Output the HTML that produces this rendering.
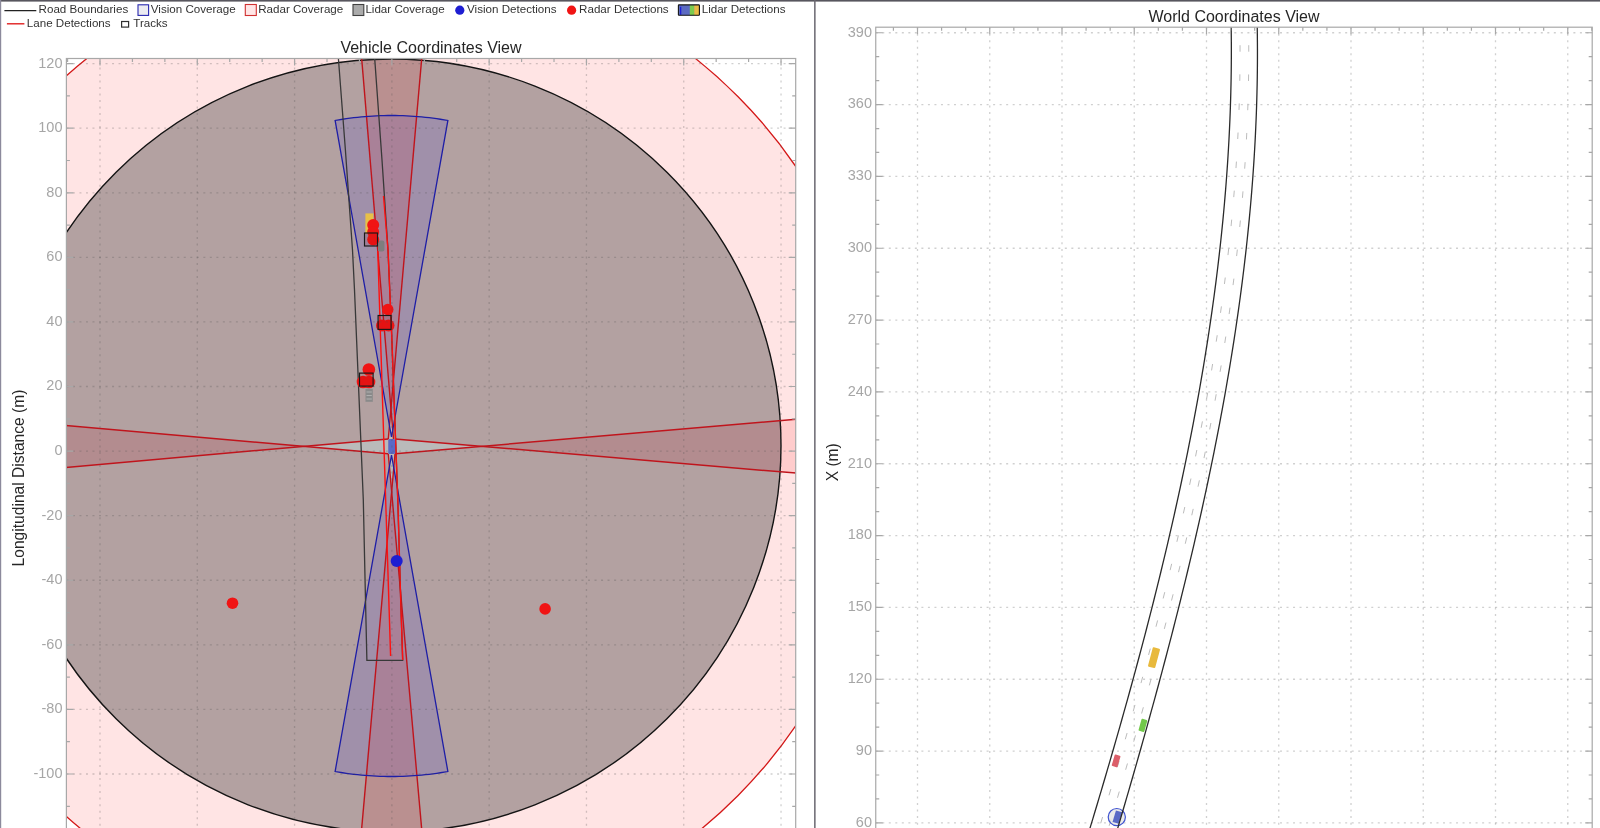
<!DOCTYPE html>
<html><head><meta charset="utf-8"><title>Bird's-Eye Plot</title>
<style>html,body{margin:0;padding:0;background:#fff;width:1600px;height:828px;overflow:hidden;position:relative;font-family:"Liberation Sans",sans-serif}</style>
</head><body>
<svg width="1600" height="828" viewBox="0 0 1600 828" style="position:absolute;left:0;top:0;will-change:transform">
<defs>
<clipPath id="cl"><rect x="66.4" y="58.5" width="729.3000000000001" height="841.5"/></clipPath>
<clipPath id="cr"><rect x="875.75" y="27.2" width="716.45" height="900"/></clipPath>
<linearGradient id="lidg" x1="0" x2="1" y1="0" y2="0"><stop offset="0" stop-color="#4a5ab8"/><stop offset="0.45" stop-color="#5a78c0"/><stop offset="0.6" stop-color="#7cc060"/><stop offset="0.75" stop-color="#d8c050"/><stop offset="1" stop-color="#e8b840"/></linearGradient>
<clipPath id="lid"><ellipse cx="391.5" cy="445.45" rx="389.5" ry="386.5"/></clipPath>
</defs>
<rect width="1600" height="828" fill="#ffffff"/>
<g clip-path="url(#cl)">
<ellipse cx="391.2" cy="446.1" rx="490.6" ry="494.1" fill="#ffe4e4" stroke="#d41818" stroke-width="1.3"/>
<g fill="#ff0000" fill-opacity="0.1"><polygon points="302.5,446.3 0,419.8 0,473.3"/><polygon points="488.75,446.3 900,410.4 900,482.0"/></g>
<ellipse cx="391.5" cy="445.45" rx="389.5" ry="386.5" fill="#b3a1a1"/>
<g fill="#b38c8f" clip-path="url(#lid)"><polygon points="302.5,446.3 0,419.8 0,473.3"/><polygon points="488.75,446.3 900,410.4 900,482.0"/></g>
<polygon points="302.5,446.3 388.3,438.9 388.3,453.8" fill="#bababa"/>
<polygon points="488.75,446.3 395.1,438.9 395.1,453.8" fill="#bababa"/>
<polygon points="391.5,437 335.12,120.48 338.84,119.84 342.57,119.24 346.31,118.69 350.06,118.18 353.8,117.72 357.56,117.3 361.32,116.92 365.08,116.59 368.85,116.3 372.62,116.05 376.39,115.86 380.17,115.7 383.94,115.59 387.72,115.52 391.5,115.5 395.28,115.52 399.06,115.59 402.83,115.7 406.61,115.86 410.38,116.05 414.15,116.3 417.92,116.59 421.68,116.92 425.44,117.3 429.2,117.72 432.94,118.18 436.69,118.69 440.43,119.24 444.16,119.84 447.88,120.48" fill="#0000ff" fill-opacity="0.1" stroke="none"/>
<polygon points="391.5,455 335.12,771.52 338.84,772.16 342.57,772.76 346.31,773.31 350.06,773.82 353.8,774.28 357.56,774.7 361.32,775.08 365.08,775.41 368.85,775.7 372.62,775.95 376.39,776.14 380.17,776.3 383.94,776.41 387.72,776.48 391.5,776.5 395.28,776.48 399.06,776.41 402.83,776.3 406.61,776.14 410.38,775.95 414.15,775.7 417.92,775.41 421.68,775.08 425.44,774.7 429.2,774.28 432.94,773.82 436.69,773.31 440.43,772.76 444.16,772.16 447.88,771.52" fill="#0000ff" fill-opacity="0.1" stroke="none"/>
<polygon points="390.96,408.7 355.1,-20 428.6,-20" fill="#ff0000" fill-opacity="0.1"/><polygon points="390.96,408.7 393.5,439 388.3,439" fill="#bababa"/>
<polygon points="391.65,491.6 355.3,900 428,900" fill="#ff0000" fill-opacity="0.1"/><polygon points="391.65,491.6 395,454 388.3,454" fill="#bababa"/>
<ellipse cx="391.5" cy="445.45" rx="389.5" ry="386.5" fill="none" stroke="#141414" stroke-width="1.4"/>
<polyline points="0,419.8 388.3,453.8" fill="none" stroke="#c0141c" stroke-width="1.5"/>
<polyline points="0,473.3 388.3,438.9" fill="none" stroke="#c0141c" stroke-width="1.5"/>
<polyline points="900,410.4 395.1,453.8" fill="none" stroke="#c0141c" stroke-width="1.5"/>
<polyline points="900,482.0 395.1,438.9" fill="none" stroke="#c0141c" stroke-width="1.5"/>
<polyline points="355.1,-20 393.5,439" fill="none" stroke="#c0141c" stroke-width="1.4"/>
<polyline points="428.6,-20 388.3,439" fill="none" stroke="#c0141c" stroke-width="1.4"/>
<polyline points="355.3,900 395,454" fill="none" stroke="#c0141c" stroke-width="1.4"/>
<polyline points="428.0,900 388.3,454" fill="none" stroke="#c0141c" stroke-width="1.4"/>
<polygon points="391.5,437 335.12,120.48 338.84,119.84 342.57,119.24 346.31,118.69 350.06,118.18 353.8,117.72 357.56,117.3 361.32,116.92 365.08,116.59 368.85,116.3 372.62,116.05 376.39,115.86 380.17,115.7 383.94,115.59 387.72,115.52 391.5,115.5 395.28,115.52 399.06,115.59 402.83,115.7 406.61,115.86 410.38,116.05 414.15,116.3 417.92,116.59 421.68,116.92 425.44,117.3 429.2,117.72 432.94,118.18 436.69,118.69 440.43,119.24 444.16,119.84 447.88,120.48" fill="none" stroke="#1e1ea6" stroke-width="1.3"/>
<polygon points="391.5,455 335.12,771.52 338.84,772.16 342.57,772.76 346.31,773.31 350.06,773.82 353.8,774.28 357.56,774.7 361.32,775.08 365.08,775.41 368.85,775.7 372.62,775.95 376.39,776.14 380.17,776.3 383.94,776.41 387.72,776.48 391.5,776.5 395.28,776.48 399.06,776.41 402.83,776.3 406.61,776.14 410.38,775.95 414.15,775.7 417.92,775.41 421.68,775.08 425.44,774.7 429.2,774.28 432.94,773.82 436.69,773.31 440.43,772.76 444.16,772.16 447.88,771.52" fill="none" stroke="#1e1ea6" stroke-width="1.3"/>
<polyline points="338.4,40 338.4,58.5 345.4,150 352.5,250 354.5,290 360.8,440 363.3,500 365.5,600 366.9,660.4 402.7,660.4 400.7,600 397.8,500 391.5,330 388,250 382,160 374.7,58.5 374.7,40" fill="none" stroke="#383838" stroke-width="1.3"/>
<polyline points="377.8,251 390.6,656" fill="none" stroke="#ff1010" stroke-width="1.4"/>
<polyline points="383.5,196 388,250 391.5,330 397.8,500 400.7,600 402.7,660" fill="none" stroke="#ff1010" stroke-width="1.4"/>
<rect x="388.3" y="439" width="6.8" height="15" rx="1.5" fill="#5a6ac8"/>
<rect x="365.4" y="213.4" width="8" height="20" fill="#e8c048"/>
<rect x="378" y="240.6" width="6.4" height="10.8" rx="2" fill="#7e7e7e"/>
<rect x="365.5" y="388.8" width="7.3" height="13" fill="#8a8a8a"/>
<line x1="366.5" x2="371.8" y1="392" y2="392" stroke="#b0b0b0" stroke-width="1"/>
<line x1="366.5" x2="371.8" y1="395.5" y2="395.5" stroke="#b0b0b0" stroke-width="1"/>
<line x1="366.5" x2="371.8" y1="399" y2="399" stroke="#b0b0b0" stroke-width="1"/>
<circle cx="373.2" cy="225" r="6" fill="#f01414"/>
<circle cx="373.2" cy="232" r="6" fill="#f01414"/>
<circle cx="373.2" cy="239.5" r="6" fill="#f01414"/>
<circle cx="387.8" cy="309.5" r="5.7" fill="#f01414"/>
<circle cx="382" cy="325.5" r="6" fill="#f01414"/>
<circle cx="388.5" cy="325.5" r="6" fill="#f01414"/>
<circle cx="368.85" cy="369.5" r="6.3" fill="#f01414"/>
<circle cx="363" cy="382" r="6.3" fill="#f01414"/>
<circle cx="369" cy="382" r="6.3" fill="#f01414"/>
<rect x="364.5" y="233" width="13.0" height="13" fill="#901010" fill-opacity="0.12" stroke="#181818" stroke-width="1.15"/>
<rect x="378.1" y="315.5" width="13.0" height="13.899999999999977" fill="#901010" fill-opacity="0.12" stroke="#181818" stroke-width="1.15"/>
<rect x="359.5" y="373.1" width="13.600000000000023" height="13.0" fill="#901010" fill-opacity="0.12" stroke="#181818" stroke-width="1.15"/>
<circle cx="232.5" cy="603.2" r="5.8" fill="#f01414"/>
<circle cx="545.1" cy="608.9" r="5.8" fill="#f01414"/>
<circle cx="396.7" cy="560.9" r="6" fill="#1e1ed2"/>
<line x1="100" x2="100" y1="54.34" y2="900" stroke="#505050" stroke-opacity="0.27" stroke-width="1.3" stroke-dasharray="2 4.52"/>
<line x1="197.29" x2="197.29" y1="54.34" y2="900" stroke="#505050" stroke-opacity="0.27" stroke-width="1.3" stroke-dasharray="2 4.52"/>
<line x1="294.58" x2="294.58" y1="54.34" y2="900" stroke="#505050" stroke-opacity="0.27" stroke-width="1.3" stroke-dasharray="2 4.52"/>
<line x1="391.87" x2="391.87" y1="54.34" y2="900" stroke="#505050" stroke-opacity="0.27" stroke-width="1.3" stroke-dasharray="2 4.52"/>
<line x1="489.16" x2="489.16" y1="54.34" y2="900" stroke="#505050" stroke-opacity="0.27" stroke-width="1.3" stroke-dasharray="2 4.52"/>
<line x1="586.45" x2="586.45" y1="54.34" y2="900" stroke="#505050" stroke-opacity="0.27" stroke-width="1.3" stroke-dasharray="2 4.52"/>
<line x1="683.74" x2="683.74" y1="54.34" y2="900" stroke="#505050" stroke-opacity="0.27" stroke-width="1.3" stroke-dasharray="2 4.52"/>
<line x1="781.03" x2="781.03" y1="54.34" y2="900" stroke="#505050" stroke-opacity="0.27" stroke-width="1.3" stroke-dasharray="2 4.52"/>
<line x1="66.4" x2="795.7" y1="838.58" y2="838.58" stroke="#505050" stroke-opacity="0.27" stroke-width="1.3" stroke-dasharray="2 4.52"/>
<line x1="66.4" x2="795.7" y1="774" y2="774" stroke="#505050" stroke-opacity="0.27" stroke-width="1.3" stroke-dasharray="2 4.52"/>
<line x1="66.4" x2="795.7" y1="709.42" y2="709.42" stroke="#505050" stroke-opacity="0.27" stroke-width="1.3" stroke-dasharray="2 4.52"/>
<line x1="66.4" x2="795.7" y1="644.84" y2="644.84" stroke="#505050" stroke-opacity="0.27" stroke-width="1.3" stroke-dasharray="2 4.52"/>
<line x1="66.4" x2="795.7" y1="580.26" y2="580.26" stroke="#505050" stroke-opacity="0.27" stroke-width="1.3" stroke-dasharray="2 4.52"/>
<line x1="66.4" x2="795.7" y1="515.68" y2="515.68" stroke="#505050" stroke-opacity="0.27" stroke-width="1.3" stroke-dasharray="2 4.52"/>
<line x1="66.4" x2="795.7" y1="451.1" y2="451.1" stroke="#505050" stroke-opacity="0.27" stroke-width="1.3" stroke-dasharray="2 4.52"/>
<line x1="66.4" x2="795.7" y1="386.52" y2="386.52" stroke="#505050" stroke-opacity="0.27" stroke-width="1.3" stroke-dasharray="2 4.52"/>
<line x1="66.4" x2="795.7" y1="321.94" y2="321.94" stroke="#505050" stroke-opacity="0.27" stroke-width="1.3" stroke-dasharray="2 4.52"/>
<line x1="66.4" x2="795.7" y1="257.36" y2="257.36" stroke="#505050" stroke-opacity="0.27" stroke-width="1.3" stroke-dasharray="2 4.52"/>
<line x1="66.4" x2="795.7" y1="192.78" y2="192.78" stroke="#505050" stroke-opacity="0.27" stroke-width="1.3" stroke-dasharray="2 4.52"/>
<line x1="66.4" x2="795.7" y1="128.2" y2="128.2" stroke="#505050" stroke-opacity="0.27" stroke-width="1.3" stroke-dasharray="2 4.52"/>
<line x1="66.4" x2="795.7" y1="63.62" y2="63.62" stroke="#505050" stroke-opacity="0.27" stroke-width="1.3" stroke-dasharray="2 4.52"/>
</g>
<rect x="66.4" y="58.5" width="729.3" height="900" fill="none" stroke="#a8a8a8" stroke-width="1.2"/>
<path d="M66.4,806.29h3.5M795.7,806.29h-3.5M66.4,774h7M795.7,774h-7M66.4,741.71h3.5M795.7,741.71h-3.5M66.4,709.42h7M795.7,709.42h-7M66.4,677.13h3.5M795.7,677.13h-3.5M66.4,644.84h7M795.7,644.84h-7M66.4,612.55h3.5M795.7,612.55h-3.5M66.4,580.26h7M795.7,580.26h-7M66.4,547.97h3.5M795.7,547.97h-3.5M66.4,515.68h7M795.7,515.68h-7M66.4,483.39h3.5M795.7,483.39h-3.5M66.4,451.1h7M795.7,451.1h-7M66.4,418.81h3.5M795.7,418.81h-3.5M66.4,386.52h7M795.7,386.52h-7M66.4,354.23h3.5M795.7,354.23h-3.5M66.4,321.94h7M795.7,321.94h-7M66.4,289.65h3.5M795.7,289.65h-3.5M66.4,257.36h7M795.7,257.36h-7M66.4,225.07h3.5M795.7,225.07h-3.5M66.4,192.78h7M795.7,192.78h-7M66.4,160.49h3.5M795.7,160.49h-3.5M66.4,128.2h7M795.7,128.2h-7M66.4,95.91h3.5M795.7,95.91h-3.5M66.4,63.62h7M795.7,63.62h-7M67.57,58.5v3.5M100,58.5v7M132.43,58.5v3.5M164.86,58.5v3.5M197.29,58.5v7M229.72,58.5v3.5M262.15,58.5v3.5M294.58,58.5v7M327.01,58.5v3.5M359.44,58.5v3.5M391.87,58.5v7M424.3,58.5v3.5M456.73,58.5v3.5M489.16,58.5v7M521.59,58.5v3.5M554.02,58.5v3.5M586.45,58.5v7M618.88,58.5v3.5M651.31,58.5v3.5M683.74,58.5v7M716.17,58.5v3.5M748.6,58.5v3.5M781.03,58.5v7" stroke="#a8a8a8" stroke-width="1.2" fill="none"/>
<text x="62.5" y="777.9" text-anchor="end" font-size="14.5" fill="#a6a6a6" font-family="Liberation Sans, sans-serif">-100</text>
<text x="62.5" y="713.32" text-anchor="end" font-size="14.5" fill="#a6a6a6" font-family="Liberation Sans, sans-serif">-80</text>
<text x="62.5" y="648.74" text-anchor="end" font-size="14.5" fill="#a6a6a6" font-family="Liberation Sans, sans-serif">-60</text>
<text x="62.5" y="584.16" text-anchor="end" font-size="14.5" fill="#a6a6a6" font-family="Liberation Sans, sans-serif">-40</text>
<text x="62.5" y="519.58" text-anchor="end" font-size="14.5" fill="#a6a6a6" font-family="Liberation Sans, sans-serif">-20</text>
<text x="62.5" y="455" text-anchor="end" font-size="14.5" fill="#a6a6a6" font-family="Liberation Sans, sans-serif">0</text>
<text x="62.5" y="390.42" text-anchor="end" font-size="14.5" fill="#a6a6a6" font-family="Liberation Sans, sans-serif">20</text>
<text x="62.5" y="325.84" text-anchor="end" font-size="14.5" fill="#a6a6a6" font-family="Liberation Sans, sans-serif">40</text>
<text x="62.5" y="261.26" text-anchor="end" font-size="14.5" fill="#a6a6a6" font-family="Liberation Sans, sans-serif">60</text>
<text x="62.5" y="196.68" text-anchor="end" font-size="14.5" fill="#a6a6a6" font-family="Liberation Sans, sans-serif">80</text>
<text x="62.5" y="132.1" text-anchor="end" font-size="14.5" fill="#a6a6a6" font-family="Liberation Sans, sans-serif">100</text>
<text x="62.5" y="67.52" text-anchor="end" font-size="14.5" fill="#a6a6a6" font-family="Liberation Sans, sans-serif">120</text>
<text x="431" y="53.1" text-anchor="middle" font-size="16" fill="#262626" font-family="Liberation Sans, sans-serif">Vehicle Coordinates View</text>
<text transform="translate(23.6,478) rotate(-90)" text-anchor="middle" font-size="15.6" fill="#262626" font-family="Liberation Sans, sans-serif">Longitudinal Distance (m)</text>
<g clip-path="url(#cr)">
<line x1="917.5" x2="917.5" y1="27.2" y2="900" stroke="#505050" stroke-opacity="0.27" stroke-width="1.3" stroke-dasharray="2 4.52"/>
<line x1="989.75" x2="989.75" y1="27.2" y2="900" stroke="#505050" stroke-opacity="0.27" stroke-width="1.3" stroke-dasharray="2 4.52"/>
<line x1="1062" x2="1062" y1="27.2" y2="900" stroke="#505050" stroke-opacity="0.27" stroke-width="1.3" stroke-dasharray="2 4.52"/>
<line x1="1134.25" x2="1134.25" y1="27.2" y2="900" stroke="#505050" stroke-opacity="0.27" stroke-width="1.3" stroke-dasharray="2 4.52"/>
<line x1="1206.5" x2="1206.5" y1="27.2" y2="900" stroke="#505050" stroke-opacity="0.27" stroke-width="1.3" stroke-dasharray="2 4.52"/>
<line x1="1278.75" x2="1278.75" y1="27.2" y2="900" stroke="#505050" stroke-opacity="0.27" stroke-width="1.3" stroke-dasharray="2 4.52"/>
<line x1="1351" x2="1351" y1="27.2" y2="900" stroke="#505050" stroke-opacity="0.27" stroke-width="1.3" stroke-dasharray="2 4.52"/>
<line x1="1423.25" x2="1423.25" y1="27.2" y2="900" stroke="#505050" stroke-opacity="0.27" stroke-width="1.3" stroke-dasharray="2 4.52"/>
<line x1="1495.5" x2="1495.5" y1="27.2" y2="900" stroke="#505050" stroke-opacity="0.27" stroke-width="1.3" stroke-dasharray="2 4.52"/>
<line x1="1567.75" x2="1567.75" y1="27.2" y2="900" stroke="#505050" stroke-opacity="0.27" stroke-width="1.3" stroke-dasharray="2 4.52"/>
<line x1="875.75" x2="1592.2" y1="822.9" y2="822.9" stroke="#505050" stroke-opacity="0.27" stroke-width="1.3" stroke-dasharray="2 4.52"/>
<line x1="875.75" x2="1592.2" y1="751.07" y2="751.07" stroke="#505050" stroke-opacity="0.27" stroke-width="1.3" stroke-dasharray="2 4.52"/>
<line x1="875.75" x2="1592.2" y1="679.24" y2="679.24" stroke="#505050" stroke-opacity="0.27" stroke-width="1.3" stroke-dasharray="2 4.52"/>
<line x1="875.75" x2="1592.2" y1="607.41" y2="607.41" stroke="#505050" stroke-opacity="0.27" stroke-width="1.3" stroke-dasharray="2 4.52"/>
<line x1="875.75" x2="1592.2" y1="535.57" y2="535.57" stroke="#505050" stroke-opacity="0.27" stroke-width="1.3" stroke-dasharray="2 4.52"/>
<line x1="875.75" x2="1592.2" y1="463.74" y2="463.74" stroke="#505050" stroke-opacity="0.27" stroke-width="1.3" stroke-dasharray="2 4.52"/>
<line x1="875.75" x2="1592.2" y1="391.91" y2="391.91" stroke="#505050" stroke-opacity="0.27" stroke-width="1.3" stroke-dasharray="2 4.52"/>
<line x1="875.75" x2="1592.2" y1="320.08" y2="320.08" stroke="#505050" stroke-opacity="0.27" stroke-width="1.3" stroke-dasharray="2 4.52"/>
<line x1="875.75" x2="1592.2" y1="248.25" y2="248.25" stroke="#505050" stroke-opacity="0.27" stroke-width="1.3" stroke-dasharray="2 4.52"/>
<line x1="875.75" x2="1592.2" y1="176.41" y2="176.41" stroke="#505050" stroke-opacity="0.27" stroke-width="1.3" stroke-dasharray="2 4.52"/>
<line x1="875.75" x2="1592.2" y1="104.58" y2="104.58" stroke="#505050" stroke-opacity="0.27" stroke-width="1.3" stroke-dasharray="2 4.52"/>
<line x1="875.75" x2="1592.2" y1="32.75" y2="32.75" stroke="#505050" stroke-opacity="0.27" stroke-width="1.3" stroke-dasharray="2 4.52"/>
<path d="M1239.79,22.6L1239.65,16.1M1248.46,22.42L1248.33,15.92M1240.05,51.71L1240.04,45.21M1248.75,51.69L1248.74,45.19M1239.79,80.82L1239.89,74.32M1248.5,80.96L1248.61,74.46M1239.01,109.92L1239.23,103.43M1247.73,110.21L1247.95,103.72M1237.73,139.01L1238.06,132.52M1246.45,139.45L1246.78,132.96M1235.97,168.07L1236.41,161.59M1244.68,168.66L1245.11,162.17M1233.74,197.11L1234.28,190.63M1242.44,197.83L1242.97,191.35M1231.07,226.11L1231.7,219.64M1239.74,226.96L1240.38,220.49M1227.96,255.07L1228.69,248.61M1236.61,256.05L1237.34,249.59M1224.43,283.98L1225.26,277.54M1233.06,285.08L1233.88,278.64M1220.51,312.85L1221.42,306.41M1229.11,314.06L1230.02,307.63M1216.21,341.66L1217.21,335.24M1224.78,342.99L1225.77,336.56M1211.55,370.42L1212.62,364.01M1220.09,371.85L1221.16,365.44M1206.54,399.13L1207.69,392.73M1215.05,400.66L1216.2,394.26M1201.2,427.78L1202.42,421.39M1209.68,429.4L1210.9,423.01M1195.55,456.37L1196.84,450M1204.01,458.08L1205.29,451.71M1189.6,484.9L1190.95,478.54M1198.03,486.69L1199.38,480.34M1183.37,513.38L1184.79,507.03M1191.78,515.25L1193.2,508.9M1176.88,541.8L1178.35,535.46M1185.27,543.74L1186.74,537.41M1170.14,570.16L1171.67,563.84M1178.52,572.18L1180.04,565.86M1163.17,598.47L1164.74,592.16M1171.53,600.56L1173.11,594.25M1155.98,626.73L1157.6,620.43M1164.34,628.88L1165.96,622.58M1148.58,654.93L1150.25,648.65M1156.94,657.15L1158.6,650.86M1141,683.09L1142.7,676.82M1149.36,685.36L1151.06,679.09M1133.23,711.2L1134.98,704.94M1141.6,713.53L1143.35,707.27M1125.31,739.27L1127.09,733.02M1133.7,741.65L1135.47,735.4M1117.24,767.3L1119.05,761.06M1125.65,769.74L1127.46,763.49M1109.03,795.29L1110.87,789.06M1117.47,797.78L1119.31,791.54M1100.71,823.25L1102.57,817.02M1109.18,825.78L1111.04,819.56" stroke="#bcbcbc" stroke-width="1" fill="none"/>
<rect x="1150.25" y="647.7" width="7.5" height="20" rx="1" fill="#e8b93c" transform="rotate(14.9 1154 657.7)"/>
<rect x="1139.9" y="719.15" width="6" height="12.5" rx="1" fill="#72c84a" transform="rotate(15.72 1142.9 725.4)"/>
<rect x="1113.1" y="754.9" width="6" height="12" rx="1" fill="#dc5f6a" transform="rotate(16.09 1116.1 760.9)"/>
<circle cx="1116.8" cy="817.1" r="8.6" fill="#e6e6e6" fill-opacity="0.8" stroke="#3e52d0" stroke-width="1.2"/>
<rect x="1114.1" y="811.1" width="6.6" height="12" fill="#5a6ac6" transform="rotate(16.59 1117.4 817.1)"/>
<polyline points="1230.53,0 1230.74,7.06 1230.92,14.12 1231.07,21.18 1231.19,28.24 1231.27,35.29 1231.33,42.35 1231.35,49.41 1231.34,56.47 1231.3,63.53 1231.23,70.59 1231.13,77.65 1230.99,84.71 1230.83,91.76 1230.64,98.82 1230.42,105.88 1230.17,112.94 1229.89,120 1229.58,127.06 1229.24,134.12 1228.88,141.18 1228.48,148.24 1228.06,155.29 1227.61,162.35 1227.13,169.41 1226.62,176.47 1226.09,183.53 1225.53,190.59 1224.94,197.65 1224.33,204.71 1223.69,211.76 1223.02,218.82 1222.33,225.88 1221.61,232.94 1220.87,240 1220.1,247.06 1219.3,254.12 1218.48,261.18 1217.64,268.24 1216.77,275.29 1215.88,282.35 1214.96,289.41 1214.02,296.47 1213.05,303.53 1212.06,310.59 1211.05,317.65 1210.02,324.71 1208.96,331.76 1207.88,338.82 1206.77,345.88 1205.65,352.94 1204.5,360 1203.33,367.06 1202.14,374.12 1200.93,381.18 1199.7,388.24 1198.44,395.29 1197.17,402.35 1195.87,409.41 1194.56,416.47 1193.22,423.53 1191.86,430.59 1190.49,437.65 1189.09,444.71 1187.68,451.76 1186.24,458.82 1184.79,465.88 1183.32,472.94 1181.83,480 1180.32,487.06 1178.8,494.12 1177.26,501.18 1175.69,508.24 1174.12,515.29 1172.52,522.35 1170.91,529.41 1169.28,536.47 1167.63,543.53 1165.97,550.59 1164.29,557.65 1162.6,564.71 1160.89,571.76 1159.16,578.82 1157.42,585.88 1155.67,592.94 1153.9,600 1152.11,607.06 1150.31,614.12 1148.5,621.18 1146.67,628.24 1144.83,635.29 1142.97,642.35 1141.11,649.41 1139.22,656.47 1137.33,663.53 1135.42,670.59 1133.5,677.65 1131.57,684.71 1129.63,691.76 1127.67,698.82 1125.7,705.88 1123.72,712.94 1121.73,720 1119.73,727.06 1117.72,734.12 1115.7,741.18 1113.66,748.24 1111.62,755.29 1109.57,762.35 1107.5,769.41 1105.43,776.47 1103.35,783.53 1101.26,790.59 1099.16,797.65 1097.05,804.71 1094.93,811.76 1092.81,818.82 1090.67,825.88 1088.53,832.94 1086.38,840" fill="none" stroke="#2a2a2a" stroke-width="1.3"/>
<polyline points="1256.53,0 1256.76,7.06 1256.95,14.12 1257.12,21.18 1257.25,28.24 1257.35,35.29 1257.41,42.35 1257.45,49.41 1257.45,56.47 1257.42,63.53 1257.36,70.59 1257.27,77.65 1257.15,84.71 1256.99,91.76 1256.81,98.82 1256.6,105.88 1256.36,112.94 1256.08,120 1255.78,127.06 1255.45,134.12 1255.09,141.18 1254.7,148.24 1254.29,155.29 1253.84,162.35 1253.37,169.41 1252.87,176.47 1252.34,183.53 1251.78,190.59 1251.2,197.65 1250.59,204.71 1249.95,211.76 1249.29,218.82 1248.6,225.88 1247.89,232.94 1247.15,240 1246.38,247.06 1245.59,254.12 1244.77,261.18 1243.93,268.24 1243.06,275.29 1242.17,282.35 1241.26,289.41 1240.32,296.47 1239.36,303.53 1238.37,310.59 1237.36,317.65 1236.33,324.71 1235.28,331.76 1234.2,338.82 1233.1,345.88 1231.98,352.94 1230.83,360 1229.67,367.06 1228.48,374.12 1227.27,381.18 1226.05,388.24 1224.8,395.29 1223.53,402.35 1222.24,409.41 1220.92,416.47 1219.59,423.53 1218.24,430.59 1216.88,437.65 1215.49,444.71 1214.08,451.76 1212.65,458.82 1211.21,465.88 1209.75,472.94 1208.27,480 1206.77,487.06 1205.25,494.12 1203.72,501.18 1202.17,508.24 1200.6,515.29 1199.02,522.35 1197.42,529.41 1195.8,536.47 1194.17,543.53 1192.52,550.59 1190.85,557.65 1189.18,564.71 1187.48,571.76 1185.77,578.82 1184.05,585.88 1182.31,592.94 1180.56,600 1178.79,607.06 1177.01,614.12 1175.22,621.18 1173.42,628.24 1171.6,635.29 1169.76,642.35 1167.92,649.41 1166.06,656.47 1164.19,663.53 1162.31,670.59 1160.42,677.65 1158.52,684.71 1156.6,691.76 1154.68,698.82 1152.74,705.88 1150.79,712.94 1148.84,720 1146.87,727.06 1144.89,734.12 1142.9,741.18 1140.91,748.24 1138.9,755.29 1136.89,762.35 1134.87,769.41 1132.83,776.47 1130.79,783.53 1128.75,790.59 1126.69,797.65 1124.63,804.71 1122.56,811.76 1120.48,818.82 1118.4,825.88 1116.31,832.94 1114.21,840" fill="none" stroke="#2a2a2a" stroke-width="1.3"/>
</g>
<rect x="875.75" y="27.2" width="716.45" height="900" fill="none" stroke="#a8a8a8" stroke-width="1.2"/>
<path d="M875.75,822.9h7M1592.2,822.9h-7M875.75,798.96h3.5M1592.2,798.96h-3.5M875.75,775.01h3.5M1592.2,775.01h-3.5M875.75,751.07h7M1592.2,751.07h-7M875.75,727.13h3.5M1592.2,727.13h-3.5M875.75,703.18h3.5M1592.2,703.18h-3.5M875.75,679.24h7M1592.2,679.24h-7M875.75,655.29h3.5M1592.2,655.29h-3.5M875.75,631.35h3.5M1592.2,631.35h-3.5M875.75,607.41h7M1592.2,607.41h-7M875.75,583.46h3.5M1592.2,583.46h-3.5M875.75,559.52h3.5M1592.2,559.52h-3.5M875.75,535.57h7M1592.2,535.57h-7M875.75,511.63h3.5M1592.2,511.63h-3.5M875.75,487.69h3.5M1592.2,487.69h-3.5M875.75,463.74h7M1592.2,463.74h-7M875.75,439.8h3.5M1592.2,439.8h-3.5M875.75,415.85h3.5M1592.2,415.85h-3.5M875.75,391.91h7M1592.2,391.91h-7M875.75,367.97h3.5M1592.2,367.97h-3.5M875.75,344.02h3.5M1592.2,344.02h-3.5M875.75,320.08h7M1592.2,320.08h-7M875.75,296.13h3.5M1592.2,296.13h-3.5M875.75,272.19h3.5M1592.2,272.19h-3.5M875.75,248.25h7M1592.2,248.25h-7M875.75,224.3h3.5M1592.2,224.3h-3.5M875.75,200.36h3.5M1592.2,200.36h-3.5M875.75,176.41h7M1592.2,176.41h-7M875.75,152.47h3.5M1592.2,152.47h-3.5M875.75,128.53h3.5M1592.2,128.53h-3.5M875.75,104.58h7M1592.2,104.58h-7M875.75,80.64h3.5M1592.2,80.64h-3.5M875.75,56.69h3.5M1592.2,56.69h-3.5M875.75,32.75h7M1592.2,32.75h-7M893.42,27.2v3.5M917.5,27.2v7M941.58,27.2v3.5M965.67,27.2v3.5M989.75,27.2v7M1013.83,27.2v3.5M1037.92,27.2v3.5M1062,27.2v7M1086.08,27.2v3.5M1110.17,27.2v3.5M1134.25,27.2v7M1158.33,27.2v3.5M1182.42,27.2v3.5M1206.5,27.2v7M1230.58,27.2v3.5M1254.67,27.2v3.5M1278.75,27.2v7M1302.83,27.2v3.5M1326.92,27.2v3.5M1351,27.2v7M1375.08,27.2v3.5M1399.17,27.2v3.5M1423.25,27.2v7M1447.33,27.2v3.5M1471.42,27.2v3.5M1495.5,27.2v7M1519.58,27.2v3.5M1543.67,27.2v3.5M1567.75,27.2v7M1591.83,27.2v3.5" stroke="#a8a8a8" stroke-width="1.2" fill="none"/>
<text x="872" y="826.8" text-anchor="end" font-size="14.5" fill="#a6a6a6" font-family="Liberation Sans, sans-serif">60</text>
<text x="872" y="754.97" text-anchor="end" font-size="14.5" fill="#a6a6a6" font-family="Liberation Sans, sans-serif">90</text>
<text x="872" y="683.14" text-anchor="end" font-size="14.5" fill="#a6a6a6" font-family="Liberation Sans, sans-serif">120</text>
<text x="872" y="611.31" text-anchor="end" font-size="14.5" fill="#a6a6a6" font-family="Liberation Sans, sans-serif">150</text>
<text x="872" y="539.47" text-anchor="end" font-size="14.5" fill="#a6a6a6" font-family="Liberation Sans, sans-serif">180</text>
<text x="872" y="467.64" text-anchor="end" font-size="14.5" fill="#a6a6a6" font-family="Liberation Sans, sans-serif">210</text>
<text x="872" y="395.81" text-anchor="end" font-size="14.5" fill="#a6a6a6" font-family="Liberation Sans, sans-serif">240</text>
<text x="872" y="323.98" text-anchor="end" font-size="14.5" fill="#a6a6a6" font-family="Liberation Sans, sans-serif">270</text>
<text x="872" y="252.15" text-anchor="end" font-size="14.5" fill="#a6a6a6" font-family="Liberation Sans, sans-serif">300</text>
<text x="872" y="180.31" text-anchor="end" font-size="14.5" fill="#a6a6a6" font-family="Liberation Sans, sans-serif">330</text>
<text x="872" y="108.48" text-anchor="end" font-size="14.5" fill="#a6a6a6" font-family="Liberation Sans, sans-serif">360</text>
<text x="872" y="36.65" text-anchor="end" font-size="14.5" fill="#a6a6a6" font-family="Liberation Sans, sans-serif">390</text>
<text x="1234" y="21.5" text-anchor="middle" font-size="16" fill="#262626" font-family="Liberation Sans, sans-serif">World Coordinates View</text>
<text transform="translate(837.8,462.3) rotate(-90)" text-anchor="middle" font-size="15.6" fill="#262626" font-family="Liberation Sans, sans-serif">X (m)</text>
<line x1="4.4" x2="36.3" y1="10.6" y2="10.6" stroke="#222" stroke-width="1.2"/>
<text x="38.6" y="13.3" font-size="11.6" fill="#333333" font-family="Liberation Sans, sans-serif">Road Boundaries</text>
<rect x="138" y="4.8" width="10.6" height="10.6" fill="#ececf2" stroke="#2828b0" stroke-width="1.1"/>
<text x="150.8" y="13.3" font-size="11.6" fill="#333333" font-family="Liberation Sans, sans-serif">Vision Coverage</text>
<rect x="245.3" y="4.5" width="11" height="11" fill="#ffe6e6" stroke="#d03030" stroke-width="1.1"/>
<text x="258.2" y="13.3" font-size="11.6" fill="#333333" font-family="Liberation Sans, sans-serif">Radar Coverage</text>
<rect x="353" y="4.5" width="10.8" height="11" fill="#ababab" stroke="#404040" stroke-width="1.1"/>
<text x="365.4" y="13.3" font-size="11.6" fill="#333333" font-family="Liberation Sans, sans-serif">Lidar Coverage</text>
<circle cx="459.8" cy="10.2" r="4.6" fill="#1e1ed2"/>
<text x="467.1" y="13.3" font-size="11.6" fill="#333333" font-family="Liberation Sans, sans-serif">Vision Detections</text>
<circle cx="571.6" cy="10.2" r="4.6" fill="#f01414"/>
<text x="579.1" y="13.3" font-size="11.6" fill="#333333" font-family="Liberation Sans, sans-serif">Radar Detections</text>
<rect x="678.4" y="4.9" width="21" height="10.4" fill="#5c6bc2"/><rect x="689.8" y="4.9" width="4.6" height="10.4" fill="#7ccc4e"/><rect x="694.2" y="4.9" width="5.2" height="10.4" fill="#e9bb44"/><rect x="680" y="6.8" width="1.3" height="8" fill="#1f1fd8"/><rect x="678.4" y="4.9" width="21" height="10.4" fill="none" stroke="#151515" stroke-width="1.1" rx="0.6"/>
<text x="701.7" y="13.3" font-size="11.6" fill="#333333" font-family="Liberation Sans, sans-serif">Lidar Detections</text>
<line x1="6.9" x2="24.4" y1="23.8" y2="23.8" stroke="#e02020" stroke-width="1.4"/>
<text x="26.8" y="27.2" font-size="11.6" fill="#333333" font-family="Liberation Sans, sans-serif">Lane Detections</text>
<rect x="121.6" y="21.5" width="7" height="5.6" fill="none" stroke="#303030" stroke-width="1.2"/>
<text x="133.3" y="27.2" font-size="11.6" fill="#333333" font-family="Liberation Sans, sans-serif">Tracks</text>
<rect x="0" y="0" width="1600" height="1.6" fill="#58565e"/>
<rect x="0" y="0" width="1.2" height="828" fill="#8c8a9c"/>
<rect x="814.1" y="0" width="1.5" height="828" fill="#6a6870"/>
</svg>
</body></html>
